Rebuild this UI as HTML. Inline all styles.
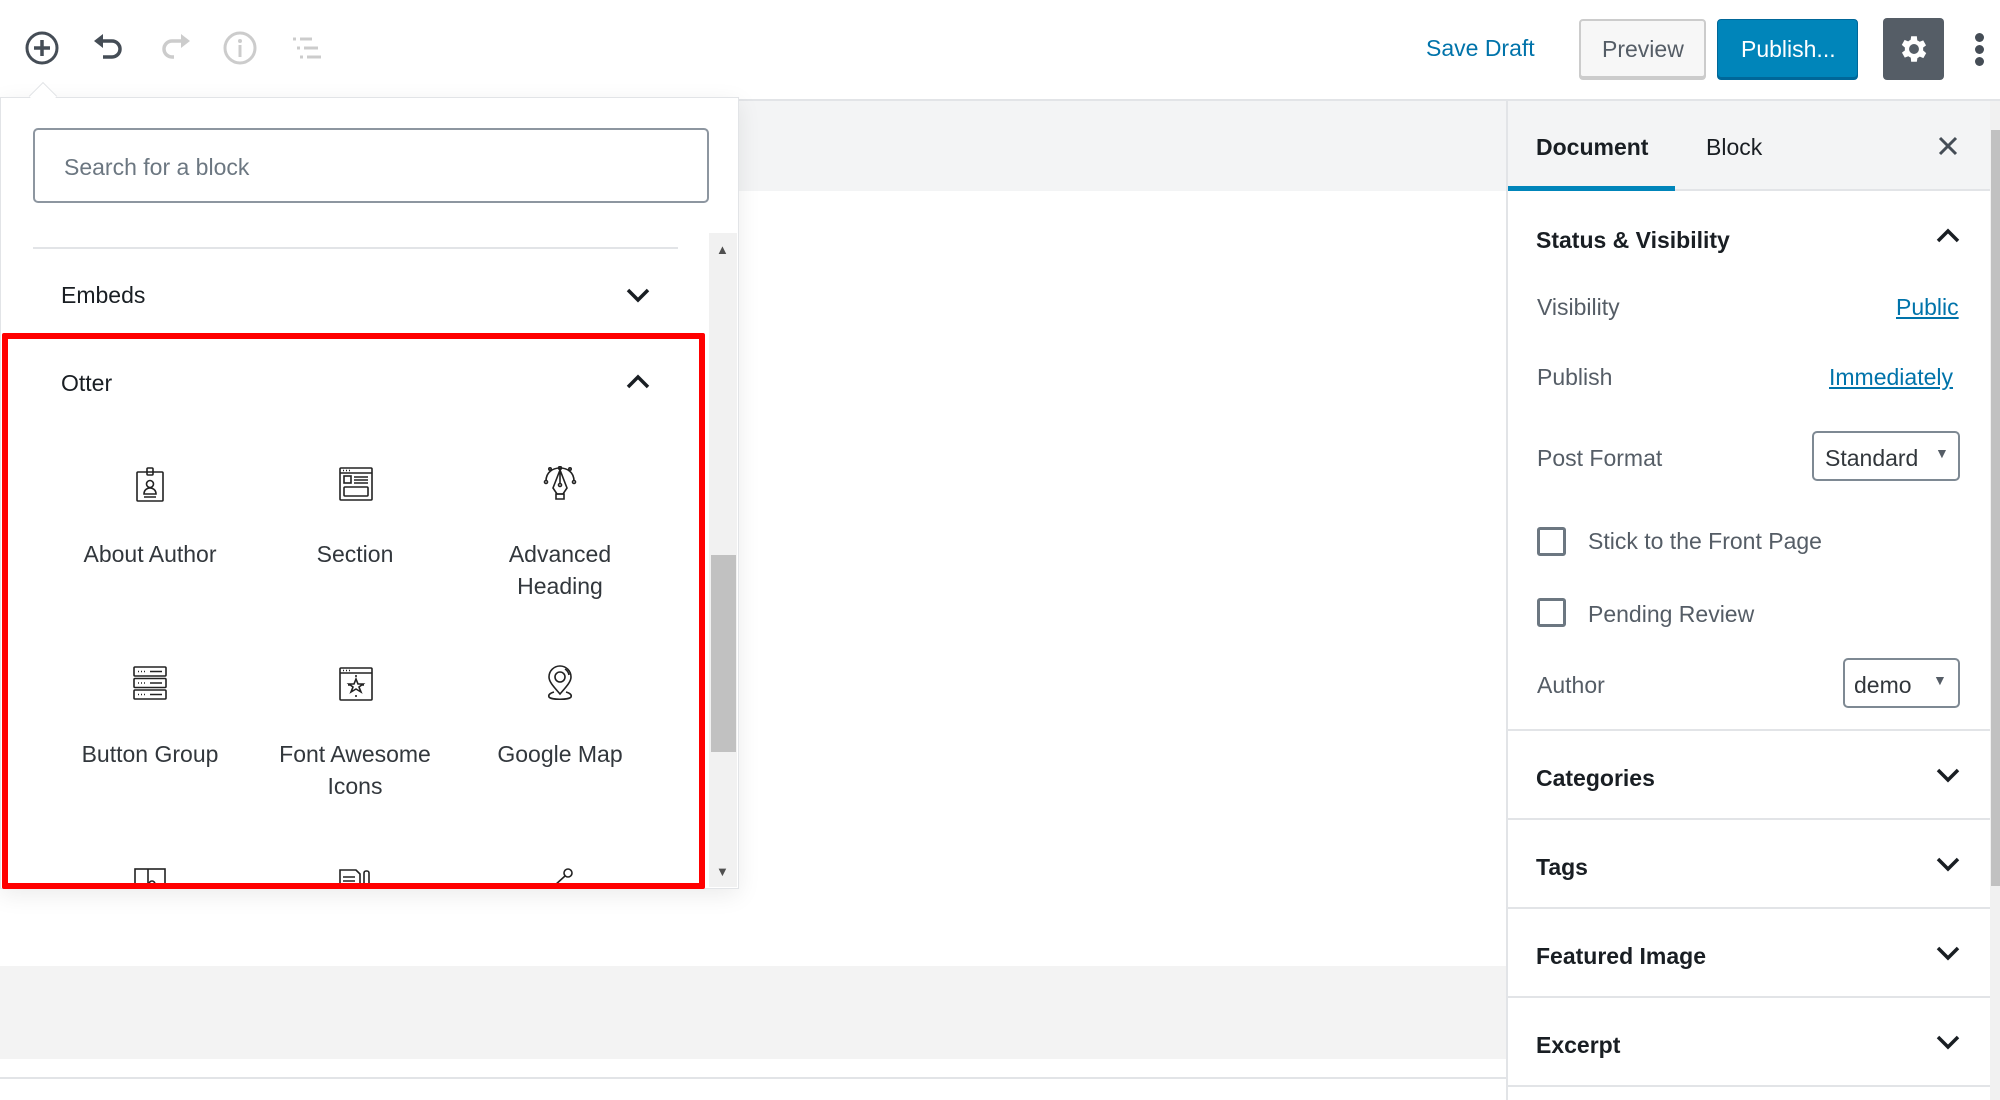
<!DOCTYPE html>
<html><head><meta charset="utf-8"><style>
*{box-sizing:border-box;margin:0;padding:0}
body{width:2000px;height:1100px;position:relative;overflow:hidden;background:#fff;font-family:"Liberation Sans","DejaVu Sans",sans-serif;color:#1e1e1e}
.a{position:absolute}
.t{position:absolute;font-size:23px;white-space:nowrap;line-height:1}
.lbl{position:absolute;font-size:23px;color:#32373c;text-align:center;width:200px;line-height:32px}
.sep{position:absolute;left:1508px;width:482px;height:2px;background:#e2e4e7}
.h{position:absolute;left:1536px;font-size:23px;font-weight:bold;color:#191e23}
.chev{position:absolute;left:1936px}
</style></head><body>
<!-- header -->
<div class="a" style="left:0;top:99px;width:2000px;height:2px;background:#e2e4e7"></div>
<svg class="a" style="left:24px;top:30px" width="36" height="36" viewBox="0 0 36 36"><circle cx="18" cy="18" r="15" fill="none" stroke="#454d56" stroke-width="3"/><path d="M18 10v16M10 18h16" stroke="#454d56" stroke-width="3.5"/></svg>
<svg class="a" style="left:90px;top:32px" width="36" height="32" viewBox="0 0 36 32"><path d="M4 9l9-7v14z" fill="#454d56"/><path d="M11 9h11a8 8 0 0 1 0 16h-9" fill="none" stroke="#454d56" stroke-width="3.5"/></svg>
<svg class="a" style="left:158px;top:32px" width="36" height="32" viewBox="0 0 36 32"><path d="M32 9l-9-7v14z" fill="#ccc"/><path d="M25 9h-11a8 8 0 0 0 0 16h2" fill="none" stroke="#ccc" stroke-width="3.5"/></svg>
<svg class="a" style="left:223px;top:31px" width="34" height="34" viewBox="0 0 34 34"><circle cx="17" cy="17" r="15" fill="none" stroke="#ccc" stroke-width="3"/><circle cx="17" cy="10" r="2" fill="#ccc"/><path d="M17 14v12" stroke="#ccc" stroke-width="3"/></svg>
<svg class="a" style="left:292px;top:36px" width="30" height="26" viewBox="0 0 30 26"><path d="M1 3h3M8 3h12M5 12h3M12 12h14M8 21h3M15 21h14" stroke="#ccc" stroke-width="3"/></svg>
<div class="t" style="left:1426px;top:37px;color:#0073aa;font-size:23px">Save Draft</div>
<div class="a" style="left:1579px;top:19px;width:127px;height:59px;border:2px solid #ccc;border-radius:4px;background:#f7f7f7;box-shadow:0 2px 0 #ccc"></div>
<div class="t" style="left:1602px;top:38px;color:#555d66">Preview</div>
<div class="a" style="left:1717px;top:19px;width:141px;height:59px;border-radius:4px;background:#0085ba;border:1px solid #006799;box-shadow:0 2px 0 #006799"></div>
<div class="t" style="left:1741px;top:38px;color:#fff">Publish...</div>
<div class="a" style="left:1883px;top:18px;width:61px;height:62px;border-radius:4px;background:#555d66"></div>
<svg class="a" style="left:1897px;top:32px" width="34" height="34" viewBox="0 0 24 24"><path fill="#fff" d="M19.4 13a7.5 7.5 0 0 0 0-2l2.1-1.6-2-3.5-2.5 1a7 7 0 0 0-1.7-1L15 3h-4l-.4 2.6a7 7 0 0 0-1.7 1l-2.5-1-2 3.5L6.6 11a7.5 7.5 0 0 0 0 2l-2.1 1.6 2 3.5 2.5-1a7 7 0 0 0 1.7 1L11 21h4l.4-2.6a7 7 0 0 0 1.7-1l2.5 1 2-3.5zM13 15.5a3.5 3.5 0 1 1 0-7 3.5 3.5 0 0 1 0 7z" transform="translate(-1 0)"/></svg>
<div class="a" style="left:1975px;top:33px;width:9px;height:9px;border-radius:50%;background:#454d56"></div>
<div class="a" style="left:1975px;top:45px;width:9px;height:9px;border-radius:50%;background:#454d56"></div>
<div class="a" style="left:1975px;top:57px;width:9px;height:9px;border-radius:50%;background:#454d56"></div>

<!-- content -->
<div class="a" style="left:0;top:101px;width:1508px;height:90px;background:#f3f4f5"></div>
<div class="a" style="left:0;top:966px;width:1508px;height:93px;background:#f3f3f3"></div>
<div class="a" style="left:0;top:1077px;width:1508px;height:2px;background:#e2e4e7"></div>

<!-- sidebar -->
<div class="a" style="left:1506px;top:101px;width:2px;height:999px;background:#e2e4e7"></div>
<div class="a" style="left:1508px;top:101px;width:482px;height:90px;background:#f3f4f5;border-bottom:2px solid #e2e4e7"></div>
<div class="a" style="left:1508px;top:186px;width:167px;height:5px;background:#0085ba"></div>
<div class="a" style="left:1990px;top:101px;width:10px;height:999px;background:#f1f1f1"></div>
<div class="a" style="left:1991px;top:130px;width:9px;height:756px;background:#c1c1c1"></div>
<div class="t" style="left:1536px;top:136px;font-weight:bold;color:#191e23">Document</div>
<div class="t" style="left:1706px;top:136px;color:#191e23">Block</div>
<svg class="a" style="left:1938px;top:136px" width="20" height="20" viewBox="0 0 20 20"><path d="M2 2l16 16M18 2L2 18" stroke="#454d56" stroke-width="3"/></svg>
<div class="h" style="top:227px">Status &amp; Visibility</div>
<svg class="chev" style="top:228px" width="24" height="16" viewBox="0 0 24 16"><path d="M2 13l10-10 10 10" fill="none" stroke="#191e23" stroke-width="3.5"/></svg>
<div class="t" style="left:1537px;top:296px;color:#555d66">Visibility</div>
<div class="t" style="left:1896px;top:296px;color:#0073aa;text-decoration:underline">Public</div>
<div class="t" style="left:1537px;top:366px;color:#555d66">Publish</div>
<div class="t" style="left:1829px;top:366px;color:#0073aa;text-decoration:underline">Immediately</div>
<div class="t" style="left:1537px;top:447px;color:#555d66">Post Format</div>
<div class="a" style="left:1812px;top:431px;width:148px;height:50px;border:2px solid #7e8993;border-radius:5px"></div>
<div class="t" style="left:1825px;top:447px;color:#32373c">Standard</div>
<div class="t" style="left:1935px;top:446px;font-size:14px;color:#555d66">▼</div>
<div class="a" style="left:1537px;top:527px;width:29px;height:29px;border:3px solid #6c7781;border-radius:3px"></div>
<div class="t" style="left:1588px;top:530px;color:#555d66">Stick to the Front Page</div>
<div class="a" style="left:1537px;top:598px;width:29px;height:29px;border:3px solid #6c7781;border-radius:3px"></div>
<div class="t" style="left:1588px;top:603px;color:#555d66">Pending Review</div>
<div class="t" style="left:1537px;top:674px;color:#555d66">Author</div>
<div class="a" style="left:1843px;top:658px;width:117px;height:50px;border:2px solid #7e8993;border-radius:5px"></div>
<div class="t" style="left:1854px;top:674px;color:#32373c">demo</div>
<div class="t" style="left:1933px;top:673px;font-size:14px;color:#555d66">▼</div>
<div class="sep" style="top:729px"></div>
<div class="h" style="top:765px">Categories</div>
<svg class="chev" style="top:767px" width="24" height="16" viewBox="0 0 24 16"><path d="M2 3l10 10 10-10" fill="none" stroke="#191e23" stroke-width="3.5"/></svg>
<div class="sep" style="top:818px"></div>
<div class="h" style="top:854px">Tags</div>
<svg class="chev" style="top:856px" width="24" height="16" viewBox="0 0 24 16"><path d="M2 3l10 10 10-10" fill="none" stroke="#191e23" stroke-width="3.5"/></svg>
<div class="sep" style="top:907px"></div>
<div class="h" style="top:943px">Featured Image</div>
<svg class="chev" style="top:945px" width="24" height="16" viewBox="0 0 24 16"><path d="M2 3l10 10 10-10" fill="none" stroke="#191e23" stroke-width="3.5"/></svg>
<div class="sep" style="top:996px"></div>
<div class="h" style="top:1032px">Excerpt</div>
<svg class="chev" style="top:1034px" width="24" height="16" viewBox="0 0 24 16"><path d="M2 3l10 10 10-10" fill="none" stroke="#191e23" stroke-width="3.5"/></svg>
<div class="sep" style="top:1085px"></div>

<!-- inserter popover -->
<div class="a" style="left:0;top:97px;width:739px;height:792px;background:#fff;border:1px solid #e2e4e7;box-shadow:0 6px 22px rgba(0,0,0,.08)"></div>
<div class="a" style="left:33px;top:86px;width:20px;height:20px;background:#fff;border-left:1px solid #e2e4e7;border-top:1px solid #e2e4e7;transform:rotate(45deg)"></div>
<div class="a" style="left:33px;top:128px;width:676px;height:75px;border:2px solid #8d96a0;border-radius:5px"></div>
<div class="t" style="left:64px;top:156px;color:#6c7781">Search for a block</div>
<div class="a" style="left:33px;top:247px;width:645px;height:2px;background:#e2e4e7"></div>
<div class="a" style="left:709px;top:233px;width:28px;height:654px;background:#f1f1f1"></div>
<div class="a" style="left:711px;top:555px;width:25px;height:197px;background:#c1c1c1"></div>
<div class="t" style="left:716px;top:243px;font-size:13px;color:#505050">▲</div>
<div class="t" style="left:716px;top:865px;font-size:13px;color:#505050">▼</div>
<div class="t" style="left:61px;top:284px;color:#191e23">Embeds</div>
<svg class="a" style="left:626px;top:287px" width="24" height="16" viewBox="0 0 24 16"><path d="M2 3l10 10 10-10" fill="none" stroke="#191e23" stroke-width="3.5"/></svg>
<div class="t" style="left:61px;top:372px;color:#191e23">Otter</div>
<svg class="a" style="left:626px;top:374px" width="24" height="16" viewBox="0 0 24 16"><path d="M2 13l10-10 10 10" fill="none" stroke="#191e23" stroke-width="3.5"/></svg>

<!-- icons row1 -->
<svg class="a" style="left:134px;top:467px" width="32" height="36" viewBox="0 0 32 36" fill="none" stroke="#222" stroke-width="1.6"><rect x="3" y="5" width="26" height="29" rx="1"/><rect x="13" y="1" width="6" height="7" rx="1"/><circle cx="16" cy="17" r="3.5"/><path d="M10 27c0-4 3-6 6-6s6 2 6 6zM10 30h12"/></svg>
<svg class="a" style="left:339px;top:467px" width="34" height="34" viewBox="0 0 34 34" fill="none" stroke="#222" stroke-width="1.6"><rect x="1" y="1" width="32" height="32" rx="1"/><path d="M1 6h32M4 3.5h1M7 3.5h1M10 3.5h1"/><rect x="5" y="9" width="7" height="7"/><path d="M15 10h14M15 13h14M15 16h14"/><rect x="5" y="20" width="24" height="9" rx="1"/></svg>
<svg class="a" style="left:542px;top:466px" width="36" height="36" viewBox="0 0 36 36" fill="none" stroke="#222" stroke-width="1.6"><path d="M4 15C4 6 11 2 18 2s14 4 14 13"/><circle cx="4" cy="16" r="1.5"/><circle cx="32" cy="16" r="1.5"/><circle cx="18" cy="2" r="1.5"/><circle cx="8" cy="3" r="1.2"/><circle cx="28" cy="3" r="1.2"/><path d="M18 4l-7 18 4 6h6l4-6zM18 4v14"/><circle cx="18" cy="19" r="1.5"/><path d="M14 28h8v5h-8z"/></svg>
<div class="lbl" style="left:50px;top:538px">About Author</div>
<div class="lbl" style="left:255px;top:538px">Section</div>
<div class="lbl" style="left:460px;top:538px">Advanced<br>Heading</div>
<!-- icons row2 -->
<svg class="a" style="left:133px;top:666px" width="34" height="34" viewBox="0 0 34 34" fill="none" stroke="#222" stroke-width="1.6"><rect x="1" y="1" width="32" height="9" rx="1"/><rect x="1" y="12.5" width="32" height="9" rx="1"/><rect x="1" y="24" width="32" height="9" rx="1"/><path d="M5 5.5h1M8 5.5h1M11 5.5h1M17 5.5h12M5 17h1M8 17h1M11 17h1M17 17h12M5 28.5h1M8 28.5h1M11 28.5h1M17 28.5h12"/></svg>
<svg class="a" style="left:339px;top:667px" width="34" height="34" viewBox="0 0 34 34" fill="none" stroke="#222" stroke-width="1.6"><rect x="1" y="1" width="32" height="32" rx="1"/><path d="M1 6h32M4 3.5h1M7 3.5h1M10 3.5h1"/><path d="M17 12l2 5h5l-4 3 2 5-5-3-5 3 2-5-4-3h5z"/><path d="M17 8v2M9 18h2M23 18h2M17 28v2"/></svg>
<svg class="a" style="left:545px;top:665px" width="30" height="38" viewBox="0 0 30 38" fill="none" stroke="#222" stroke-width="1.6"><path d="M15 29C9 22 4 17 4 12a11 11 0 0 1 22 0c0 5-5 10-11 17z"/><circle cx="15" cy="12" r="5"/><path d="M20 4a9 9 0 0 1 4 6"/><path d="M9 27c-4 1-6 3-5 5 2 3 20 3 22 0 1-2-1-4-5-5"/></svg>
<div class="lbl" style="left:50px;top:738px">Button Group</div>
<div class="lbl" style="left:255px;top:738px">Font Awesome<br>Icons</div>
<div class="lbl" style="left:460px;top:738px">Google Map</div>
<!-- row3 cut -->
<svg class="a" style="left:134px;top:868px" width="32" height="20" viewBox="0 0 32 20" fill="none" stroke="#222" stroke-width="1.6"><rect x="1" y="1" width="30" height="30"/><path d="M14 1v19"/><circle cx="18" cy="16" r="3"/></svg>
<svg class="a" style="left:339px;top:868px" width="34" height="20" viewBox="0 0 34 20" fill="none" stroke="#222" stroke-width="1.6"><path d="M1 20V2h16l4 4v14M4 9h12M4 13h12M4 17h12"/><rect x="25" y="3" width="5" height="17" rx="2"/></svg>
<svg class="a" style="left:544px;top:866px" width="32" height="22" viewBox="0 0 32 22" fill="none" stroke="#222" stroke-width="1.6"><circle cx="24" cy="7" r="4"/><path d="M21 10L10 20M2 22l8-2"/></svg>

<!-- red box -->
<div class="a" style="left:2px;top:333px;width:703px;height:556px;border:6px solid #f00;border-radius:2px"></div>
</body></html>
